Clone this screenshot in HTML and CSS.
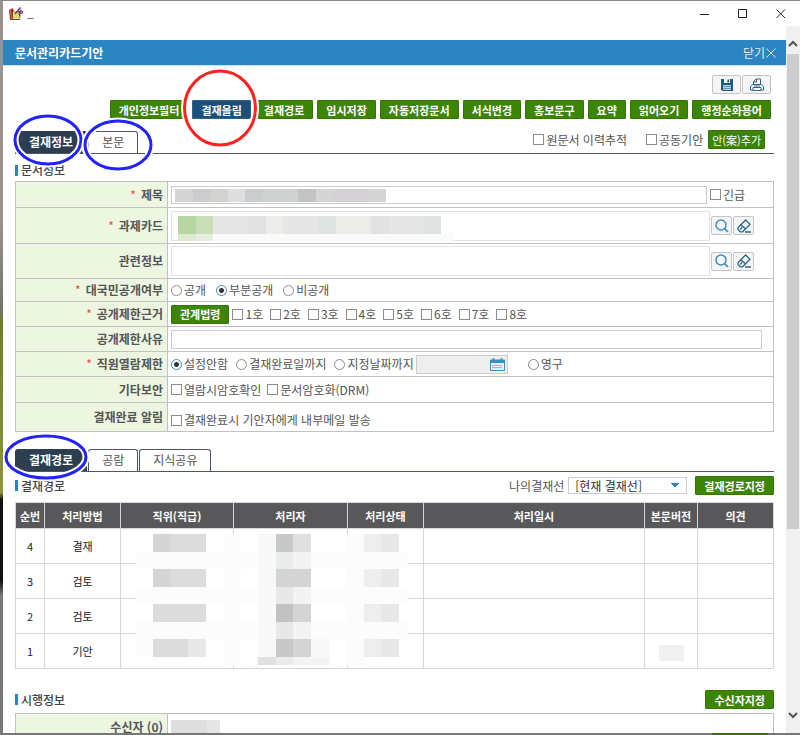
FILE: index.html
```html
<!DOCTYPE html>
<html lang="ko">
<head>
<meta charset="utf-8">
<title>문서관리카드기안</title>
<link rel="stylesheet" href="styles.css">
</head>
<body>
<svg class="defs" aria-hidden="true">
  <symbol id="i-search" viewBox="0 0 14 14"><circle cx="6" cy="6" r="5" fill="none" stroke="#3c8dc5" stroke-width="1.500"/><path d="M9.500 9.500l3.500 3.500" stroke="#3c8dc5" stroke-width="1.700"/></symbol>
  <symbol id="i-erase" viewBox="0 0 14 14"><path d="M1 8.800L8.600 1l4.400 4.200L5.600 12.800H3.400L1 10.500zM4 5.800l4.600 4.200M3.200 10.500l2-2.200M8 13h6" fill="none" stroke="#2b678d" stroke-width="1.300"/></symbol>
</svg>
<div class="window">
  <header class="titlebar">
    <svg class="app-icon" viewBox="0 0 14 14" aria-hidden="true"><path d="M0 3l4-2v11l-3 1z" fill="#b3262b"/><path d="M1 4h11l-1 9H2z" fill="#5a5048"/><path d="M4 4h5l2 8H4z" fill="#e6d673"/><path d="M1 3l2 9M4 2l1 3" stroke="#e86a3c"/><path d="M11.500 0.500L6 7" stroke="#6d3b7c" stroke-width="1.500"/><path d="M11 3l2.500 2-1 2" stroke="#a3307c" stroke-width="1.500" fill="none"/></svg>
    <span class="app-name">_</span>
    <button class="win-btn" aria-label="최소화"><svg viewBox="0 0 10 10"><path d="M0 5.500h9"/></svg></button>
    <button class="win-btn" aria-label="최대화"><svg viewBox="0 0 10 10"><path d="M.5.5h8v8h-8z"/></svg></button>
    <button class="win-btn" aria-label="창 닫기"><svg viewBox="0 0 10 10"><path d="M.5.5l8.500 8.500M9 .5L.5 9"/></svg></button>
  </header>
  <div class="viewport">
    <div class="page">
      <div class="banner">
        <h1>문서관리카드기안</h1>
        <button class="close">닫기<svg viewBox="0 0 10 10" aria-hidden="true"><path d="M.5.5l9 9M9.500.5l-9 9"/></svg></button>
      </div>
      <main>
        <div class="quick">
          <button class="icon-btn wide" aria-label="저장"><svg viewBox="0 0 14 14"><path d="M1 1h12v12H2.500L1 11.500z" fill="#1f5a80"/><path d="M4 1h6v4H4z" fill="#e9f0f5"/><path d="M7.500 1.500h1.500v3H7.500z" fill="#1f5a80"/><path d="M3 7h8v5H3z" fill="#b9cfdd"/><path d="M3 8.500h8M3 10.500h8" stroke="#6e9ab6"/></svg></button>
          <button class="icon-btn wide" aria-label="인쇄"><svg viewBox="0 0 14 14"><path d="M3.500 6.500V3.500L6 1h4.500v5.500M3.500 4H6.500V1M3 6.500h8l2.500 2v3.500H.5V8.500z" fill="#fff" stroke="#2b678d"/><path d="M3 9.500h8v3H3z" fill="#fff" stroke="#2b678d"/><path d="M4 8h6" stroke="#2b678d"/></svg></button>
        </div>
        <div class="toolbar">
          <button class="btn">개인정보필터</button>
          <span class="anchor"><button class="btn current">결재올림</button>
            <svg class="ring send" viewBox="0 0 80 84" aria-hidden="true"><ellipse class="halo" cx="40" cy="42" rx="35.500" ry="37"/><ellipse class="red" cx="40" cy="42" rx="35.500" ry="37"/></svg></span>
          <button class="btn">결재경로</button>
          <button class="btn">임시저장</button>
          <button class="btn">자동저장문서</button>
          <button class="btn">서식변경</button>
          <button class="btn">홍보문구</button>
          <button class="btn">요약</button>
          <button class="btn">읽어오기</button>
          <button class="btn">행정순화용어</button>
        </div>
        <nav class="tabs">
          <span class="anchor"><a href="#info" class="tab active">결재정보</a>
            <svg class="ring info" viewBox="0 0 76 56" aria-hidden="true"><ellipse class="halo" cx="38" cy="28" rx="33" ry="24"/><ellipse class="blue" cx="38" cy="28" rx="33" ry="24"/></svg></span>
          <span class="anchor"><a href="#body" class="tab">본문</a>
            <svg class="ring text" viewBox="0 0 76 56" aria-hidden="true"><ellipse class="halo" cx="38" cy="28" rx="33" ry="24"/><ellipse class="blue" cx="38" cy="28" rx="33" ry="24"/></svg></span>
          <div class="tab-tools">
            <label><input type="checkbox">원문서 이력추적</label>
            <label><input type="checkbox">공동기안</label>
            <button class="btn light">안(案)추가</button>
          </div>
        </nav>
        <h2 class="info-title">문서정보</h2>
        <table class="form">
          <tr class="h26"><th scope="row"><i>*</i><label for="subject">제목</label></th><td><div class="line">
            <span class="masked"><input type="text" id="subject">
              <svg class="mosaic subject" viewBox="0 0 211 13" aria-hidden="true"><path fill="#d6d5d6" d="M0 0h211v13H0z"/><path fill="#cccbce" d="M18 0h17v13H18z"/><path fill="#d2d2d1" d="M35 0h18v13H35z"/><path fill="#dededf" d="M53 0h17v13H53z"/><path fill="#cbccce" d="M70 0h18v13H70z"/><path fill="#d0d1d1" d="M88 0h35v13H88z"/><path fill="#c3c3c4" d="M123 0h18v13h-18z"/><path fill="#d3d1d5" d="M158 0h35v13h-35z"/></svg></span>
            <label class="urgent"><input type="checkbox">긴급</label></div></td></tr>
          <tr class="h36"><th scope="row"><i>*</i><label for="card">과제카드</label></th><td><div class="line tight">
            <span class="masked"><textarea id="card"></textarea>
              <svg class="mosaic card" viewBox="0 0 275 25" aria-hidden="true"><path fill="#fafafa" d="M0 17h275v8H0z"/><path fill="#b8d7a0" d="M0 0h18v18H0z"/><path fill="#cadfb9" d="M18 0h17v18H18z"/><path fill="#dcead1" d="M0 18h18v7H0z"/><path fill="#e5eedf" d="M18 18h17v7H18z"/><path fill="#e7e6e7" d="M35 0h228v18H35z"/><path fill="#e2e2e3" d="M70 0h18v18H70zM193 0h18v18h-18z"/><path fill="#ececeb" d="M88 0h17v18H88zM158 0h35v18h-35z"/><path fill="#e0e2e1" d="M141 0h17v18h-17zM246 0h17v18h-17z"/></svg></span>
            <button class="icon-btn" aria-label="과제카드 검색"><svg><use href="#i-search"/></svg></button><button class="icon-btn" aria-label="과제카드 지우기"><svg><use href="#i-erase"/></svg></button></div></td></tr>
          <tr class="h35"><th scope="row"><label for="rel">관련정보</label></th><td><div class="line tight">
            <span class="masked"><textarea id="rel"></textarea></span>
            <button class="icon-btn" aria-label="관련정보 검색"><svg><use href="#i-search"/></svg></button><button class="icon-btn" aria-label="관련정보 지우기"><svg><use href="#i-erase"/></svg></button></div></td></tr>
          <tr class="h23"><th scope="row"><i>*</i>대국민공개여부</th><td><div class="line spaced">
            <label><input type="radio" name="open">공개</label>
            <label><input type="radio" name="open" checked>부분공개</label>
            <label><input type="radio" name="open">비공개</label></div></td></tr>
          <tr class="h25"><th scope="row"><i>*</i>공개제한근거</th><td><div class="line numbers">
            <button class="btn law">관계법령</button>
            <label><input type="checkbox">1호</label>
            <label><input type="checkbox">2호</label>
            <label><input type="checkbox">3호</label>
            <label><input type="checkbox">4호</label>
            <label><input type="checkbox">5호</label>
            <label><input type="checkbox">6호</label>
            <label><input type="checkbox">7호</label>
            <label><input type="checkbox">8호</label></div></td></tr>
          <tr class="h25"><th scope="row"><label for="reason">공개제한사유</label></th><td><div class="line"><input type="text" id="reason" class="reason"></div></td></tr>
          <tr class="h25"><th scope="row"><i>*</i>직원열람제한</th><td><div class="line dates">
            <label><input type="radio" name="limit" checked>설정안함</label>
            <label><input type="radio" name="limit">결재완료일까지</label>
            <span class="until"><label><input type="radio" name="limit">지정날짜까지</label>
              <span class="date"><input type="text" aria-label="지정날짜" disabled><svg viewBox="0 0 15 13" aria-hidden="true"><path d="M.5 2h14v10.500H.5z" fill="#e4f0f8" stroke="#3c8dc5"/><path d="M1 2h13v3H1z" fill="#3c8dc5"/><path d="M3.500 0v3.500M11.500 0v3.500" stroke="#3c8dc5" stroke-width="1.500"/><path d="M2.500 7.500h10M2.500 9.500h10" stroke="#3c8dc5" stroke-dasharray="1 1"/></svg></span></span>
            <label class="forever"><input type="radio" name="limit">영구</label></div></td></tr>
          <tr class="h26"><th scope="row">기타보안</th><td><div class="line security">
            <label><input type="checkbox">열람시암호확인</label>
            <label><input type="checkbox">문서암호화(DRM)</label></div></td></tr>
          <tr class="h29"><th scope="row">결재완료 알림</th><td class="notify"><div class="line">
            <label><input type="checkbox">결재완료시 기안자에게 내부메일 발송</label></div></td></tr>
        </table>
        <nav class="tabs lower">
          <span class="anchor"><a href="#route" class="tab active">결재경로</a>
            <svg class="ring route-ring" viewBox="0 0 90 50" aria-hidden="true"><ellipse class="halo" cx="45" cy="25" rx="40" ry="21"/><ellipse class="blue" cx="45" cy="25" rx="40" ry="21"/></svg></span>
          <a href="#share" class="tab">공람</a>
          <a href="#know" class="tab">지식공유</a>
        </nav>
        <div class="section-head" id="route">
          <h2>결재경로</h2>
          <label for="line">나의결재선</label>
          <select id="line"><option>[현재 결재선]</option></select>
          <button class="btn">결재경로지정</button>
        </div>
        <div class="route-wrap">
          <table class="route">
            <colgroup><col class="c1"><col class="c2"><col class="c3"><col class="c4"><col class="c5"><col><col class="c7"><col class="c8"></colgroup>
            <thead><tr><th>순번</th><th>처리방법</th><th>직위(직급)</th><th>처리자</th><th>처리상태</th><th>처리일시</th><th>본문버전</th><th>의견</th></tr></thead>
            <tbody>
              <tr><td>4</td><td>결재</td><td></td><td></td><td></td><td></td><td></td><td></td></tr>
              <tr><td>3</td><td>검토</td><td></td><td></td><td></td><td></td><td></td><td></td></tr>
              <tr><td>2</td><td>검토</td><td></td><td></td><td></td><td></td><td></td><td></td></tr>
              <tr><td>1</td><td>기안</td><td></td><td></td><td></td><td></td><td><span class="version"></span></td><td></td></tr>
            </tbody>
          </table>
          <svg class="mosaic people" viewBox="0 0 272 131" aria-hidden="true">
            <path fill="#fff" d="M0 0h272v131H0z"/>
            <path fill="#fcfcfc" d="M0 18h272v17H0zM0 53h272v17H0zM0 88h272v17H0zM0 105h17v18H0zM88 0h17v131H88zM210 0h18v131h-18z"/>
            <path fill="#f8f8f8" d="M122 0h18v123h-18zM175 105h18v26h-18z"/>
            <path fill="#d5d5d5" d="M17 0h18v18H17zM17 35h18v18H17z"/>
            <path fill="#dcdcdc" d="M35 0h35v18H35zM35 35h35v18H35zM17 70h53v18H17zM17 105h35v18H17z"/>
            <path fill="#e8e8e8" d="M52 105h18v18H52zM245 0h18v18h-18zM245 35h18v18h-18zM245 70h18v18h-18zM245 105h18v18h-18zM140 53h17v17h-17zM140 88h17v17h-17z"/>
            <path fill="#eee" d="M228 0h17v18h-17zM228 35h17v18h-17zM228 70h17v18h-17zM228 105h17v18h-17z"/>
            <path fill="#c8c8c8" d="M140 0h17v18h-17zM140 105h17v18h-17z"/>
            <path fill="#c2c2c2" d="M140 70h17v18h-17z"/>
            <path fill="#e0e0e0" d="M157 0h18v18h-18zM122 123h18v8h-18z"/>
            <path fill="#e9eceb" d="M140 18h17v17h-17zM140 123h17v8h-17z"/>
            <path fill="#f3f3f3" d="M157 18h18v17h-18zM157 53h18v17h-18zM157 88h18v17h-18zM157 123h36v8h-36z"/>
            <path fill="#d4d4d4" d="M140 35h35v18h-35zM157 70h18v18h-18zM157 105h18v18h-18z"/>
          </svg>
        </div>
        <div class="section-head delivery">
          <h2>시행정보</h2>
          <button class="btn">수신자지정</button>
        </div>
        <table class="form">
          <tr class="h26"><th scope="row">수신자 (0)</th><td><svg class="receiver" viewBox="0 0 49 14" aria-hidden="true"><path fill="#dedede" d="M0 0h36v14H0z"/><path fill="#e6e6e6" d="M36 0h13v14H36z"/></svg></td></tr>
        </table>
      </main>
    </div>
    <div class="scrollbar" aria-hidden="true">
      <svg viewBox="0 0 10 7"><path d="M1 6l4-4 4 4"/></svg>
      <div class="track"><div class="thumb"></div></div>
      <svg viewBox="0 0 10 7"><path d="M1 1l4 4 4-4"/></svg>
    </div>
  </div>
</div>
</body>
</html>
```
FILE: styles.css
```css
* { box-sizing: border-box; }
html, body { height: 100%; }
body {
  margin: 0;
  overflow: hidden;
  padding: 1px 0 2px 3px;
  background:
    linear-gradient(#888, #888) top / 100% 1px no-repeat,
    linear-gradient(90deg, #777 0 89%, #3d6d14 89% 96%, #777 96%) bottom / 100% 2px no-repeat,
    linear-gradient(#98938f 0 30%, #77736f 42%, #6f7d2c 44%, #8c9440 67%, #111 68% 79%, #777 81%);
  font: 12px/16px "Noto Sans CJK KR", sans-serif;
  color: #555;
}
button, input, select, textarea { font: inherit; color: inherit; margin: 0; }
h1, h2 { margin: 0; font-size: 12px; line-height: 16px; }
.defs { position: absolute; width: 0; height: 0; }

.window { height: 100%; display: flex; flex-direction: column; background: #fff; overflow: hidden; }
.titlebar { flex: none; height: 25px; display: flex; align-items: center; padding-left: 6px; }
.app-icon { width: 14px; height: 14px; }
.app-name { flex: 1; padding-left: 4px; line-height: 20px; height: 24px; }
.win-btn { width: 38px; height: 24px; padding: 0; border: 0; background: none; }
.win-btn svg { display: block; margin: 0 auto; width: 10px; height: 10px; fill: none; stroke: #222; }

.viewport { flex: 1; min-height: 0; display: flex; }
.page { flex: 1; min-width: 0; padding-top: 14px; overflow: hidden; }
.banner {
  height: 26px;
  display: flex;
  align-items: center;
  justify-content: space-between;
  padding: 0 10px 0 12px;
  background: #2c85c0;
  border-bottom: 1px solid #c5e1f3;
  color: #fff;
}
.close { display: flex; align-items: center; gap: 1px; padding: 0; border: 0; background: none; color: #dcebf5; }
.close svg { width: 10px; height: 10px; fill: none; stroke: #dcebf5; }
main { padding: 9px 12px 0; }

.scrollbar { flex: none; width: 14px; display: flex; flex-direction: column; align-items: center; padding: 14px 0; background: #f0f0f0; }
.scrollbar svg { width: 10px; height: 7px; fill: none; stroke: #555; stroke-width: 2; }
.track { flex: 1; width: 12px; padding: 7px 0; }
.thumb { height: 73%; background: #cdcdcd; }

.btn {
  height: 19px;
  padding: 0 8px;
  border: 1px solid #357503;
  border-radius: 1px;
  background: #3d8507;
  color: #fff;
  font-size: 11px;
  font-weight: bold;
  line-height: 16px;
  white-space: nowrap;
}
.btn.current { background: #1c5079; border-color: #2c6389; }
.btn.light { padding: 0 3px; font-weight: normal; }
.icon-btn {
  flex: none;
  width: 21px;
  height: 19px;
  display: flex;
  align-items: center;
  justify-content: center;
  padding: 0;
  border: 1px solid #c4c4c4;
  border-radius: 2px;
  background: #f5f5f5;
}
.icon-btn.wide { width: 29px; }
.icon-btn svg { width: 14px; height: 14px; }

.quick { display: flex; justify-content: flex-end; gap: 1px; padding-right: 3px; }
.toolbar { display: flex; justify-content: flex-end; gap: 4px; padding: 6px 3px 0 0; }
.anchor { position: relative; display: flex; }

.ring { position: absolute; z-index: 2; fill: none; pointer-events: none; }
.halo { stroke: #fff; stroke-width: 7; }
.red { stroke: #f22; stroke-width: 3; }
.blue { stroke: #22f; stroke-width: 3; }
.ring.send { left: -12px; top: -34px; width: 80px; height: 84px; }
.ring.info { left: -5px; top: -19px; width: 76px; height: 56px; }
.ring.text { left: -8px; top: -14px; width: 76px; height: 56px; }
.route-ring { left: -14px; top: -17px; width: 90px; height: 50px; }

.tabs { display: flex; gap: 1px; align-items: flex-end; height: 35px; border-bottom: 1px solid #4d5863; }
.tab {
  height: 22px;
  padding: 2px 13px 0;
  border: 1px solid #4a5763;
  border-bottom: 0;
  border-radius: 3px 3px 0 0;
  background: #fff;
  color: #555;
  text-decoration: none;
}
.tab.active { background: #2c3e50; border-color: #2c3e50; color: #fff; font-weight: bold; }
.tab-tools { flex: 1; display: flex; justify-content: flex-end; align-items: center; padding: 0 9px 4px 0; }
.tab-tools label { margin-right: 19px; }
.tab-tools label:nth-of-type(2) { margin-right: 5px; }
.tabs.lower { height: 40px; }

h2 { padding-left: 6px; color: #444; font-weight: 500; background: linear-gradient(#2c85c0, #2c85c0) 0 50% / 3px 11px no-repeat; }
.info-title { margin: 8px 0 3px; }

label { display: inline-flex; align-items: center; gap: 2px; white-space: nowrap; }
input[type="checkbox"], input[type="radio"] {
  appearance: none;
  flex: none;
  width: 11px;
  height: 11px;
  border: 1px solid #8c8c8c;
  background: #fff;
}
input[type="radio"] { border-radius: 50%; }
input[type="radio"]:checked { border-color: #3c8dc5; background: radial-gradient(#333 0 2px, #fff 3px); }

.form { width: 100%; table-layout: fixed; border-collapse: collapse; }
.form th, .form td { border: 1px solid #c0c2c4; padding: 0 4px 0 3px; }
.form th { width: 152px; background: #edf6e0; text-align: right; font-weight: bold; color: #555; }
.form th i { color: #e0532f; font-style: normal; font-weight: normal; margin-right: 5px; }
.h23 { height: 23px; }
.h25 { height: 25px; }
.h26 { height: 26px; }
.h29 { height: 29px; }
.h35 { height: 35px; }
.h36 { height: 36px; }
.line { display: flex; align-items: center; gap: 3px; }
.line.tight { gap: 1px; padding-right: 15px; }
.line.spaced { gap: 10px; }
.line.dates { gap: 8px; }
.line.numbers { gap: 7px; }
.line.security { gap: 6px; }
.law { margin-right: -4px; }
.urgent { width: 59px; }
.masked { position: relative; flex: 1; display: flex; }
input[type="text"], textarea { display: block; width: 100%; height: 18px; border: 1px solid #ccc; background: #fff; padding: 0 4px; outline: 0; }
textarea { height: 30px; border-color: #e2e2e2; resize: none; }
input.reason { height: 19px; margin-right: 7px; }
.notify { vertical-align: bottom; }
.form .notify { padding-bottom: 3px; }
.until { display: flex; align-items: center; gap: 2px; }
.date { position: relative; display: block; width: 92px; }
.date input[type="text"] { height: 19px; background: #eee; }
.date svg { position: absolute; right: 3px; top: 3px; width: 15px; height: 13px; }
.forever { margin-left: 12px; }

.mosaic { position: absolute; shape-rendering: crispEdges; pointer-events: none; }
.mosaic.subject { left: 4px; top: 3px; width: 211px; height: 13px; }
.mosaic.card { left: 7px; top: 5px; width: 275px; height: 25px; }
.mosaic.people { left: 121px; top: 32px; width: 272px; height: 131px; }
.receiver { display: block; width: 49px; height: 14px; }

.section-head { display: flex; align-items: center; height: 19px; margin: 4px 0 7px; }
.section-head h2 { flex: 1; }
.section-head label { margin-right: 4px; }
.section-head select {
  appearance: none;
  width: 119px;
  height: 17px;
  margin-right: 8px;
  padding: 0 6px;
  border: 1px solid #ccc;
  border-radius: 0;
  color: #333;
  line-height: 15px;
  background: #fff conic-gradient(from -40deg at 50% 100%, #2c85c0 0 80deg, #fff 80deg) right 7px center / 8px 5px no-repeat;
}
.section-head.delivery { margin: 21px 0 4px; }

.route-wrap { position: relative; }
.route { width: 100%; table-layout: fixed; border-collapse: collapse; text-align: center; color: #222; font-size: 11px; }
.c1 { width: 29px; }
.c2 { width: 76px; }
.c3 { width: 113px; }
.c4 { width: 114px; }
.c5 { width: 76px; }
.c7 { width: 53px; }
.c8 { width: 76px; }
.route th, .route td { padding: 0; border: 1px solid #d5d5da; }
.route th { height: 26px; background: #58585a; color: #fff; }
.route td { height: 35px; }
.version { display: block; width: 25px; height: 16px; margin: 3px auto 0; background: #f0f0f0; }
```
